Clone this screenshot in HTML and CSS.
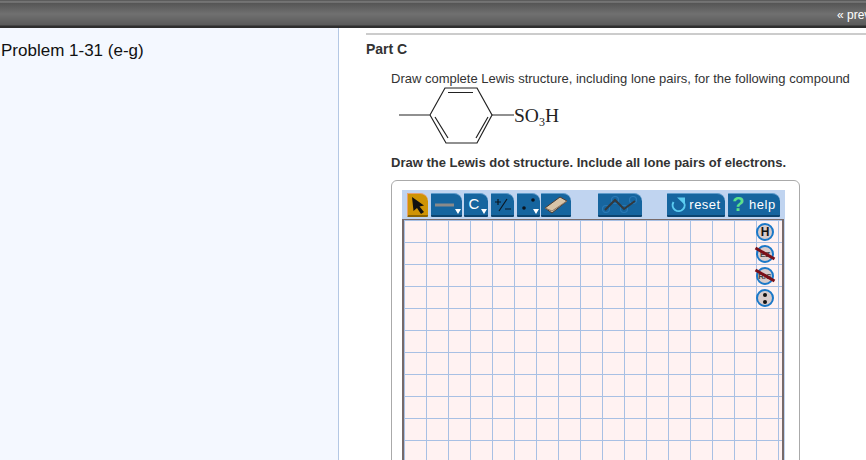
FILE: index.html
```html
<!DOCTYPE html>
<html lang="en">
<head>
    <meta charset="UTF-8">
    <title>Problem 1-31 (e-g)</title>
    <link rel="stylesheet" href="styles.css">
</head>
<body>
    <div class="topbar"><span class="prev">« prev</span></div>

    <div class="page">
        <div class="sidebar">
            <h1>Problem 1-31 (e-g)</h1>
        </div>

        <div class="main">
            <div class="rule"></div>
            <h2>Part C</h2>
            <div class="question">
                <p class="intro">Draw complete Lewis structure, including lone pairs, for the following compound</p>
                <div class="molecule">
                    <svg width="170" height="64" viewBox="0 3 170 64">
                        <g fill="none" stroke="#222" stroke-width="1.2">
                            <path d="M8 32H39L54 5H86L101 32L86 60H55L39 32"/>
                            <path d="M57 9.500H82M44 34L57 55M85 55L97 34M101 32H123"/>
                        </g>
                        <text x="123" y="39" class="formula">SO<tspan class="sub" dy="4">3</tspan><tspan dy="-4">H</tspan></text>
                    </svg>
                </div>
                <p class="prompt">Draw the Lewis dot structure. Include all lone pairs of electrons.</p>

                <div class="frame">
                    <div class="applet">
                        <div class="toolbar">
                            <div class="tool tool-arrow">
                                <svg width="16" height="18" viewBox="0 0 16 18"><path d="M2 1L14 9.500L9.500 10.500L14 16L11 18L7 12L3.500 15Z" fill="#111"/></svg>
                            </div>
                            <div class="tool tool-line drop">
                                <svg width="20" height="6" viewBox="0 0 20 6"><path d="M0 3H19" stroke="#8a8a8a" stroke-width="3"/></svg>
                            </div>
                            <div class="tool tool-c drop">C</div>
                            <div class="tool tool-charge">
                                <svg width="16" height="14" viewBox="0 0 16 14"><path d="M3 1V7M0 4H6M4 13L12 1M10 11H16" stroke="#0b1722" stroke-width="1.200" fill="none"/></svg>
                            </div>
                            <div class="tool tool-dots drop">
                                <svg width="16" height="16" viewBox="0 0 16 16"><circle cx="3" cy="11" r="1.800" fill="#0b1520"/><circle cx="12" cy="3" r="1.800" fill="#0b1520"/></svg>
                            </div>
                            <div class="tool tool-eraser">
                                <svg width="24" height="18" viewBox="0 0 24 18"><path d="M1 12L16 1L23 5L8 17Z" fill="#d8c4a8" stroke="#4a3a30"/><path d="M1 12L8 15L23 5" fill="none" stroke="#8a7868"/></svg>
                            </div>
                            <div class="tool tool-chain">
                                <svg width="36" height="18" viewBox="0 0 36 18">
                                    <g fill="none" stroke="#2a78b4" stroke-width="1.200"><circle cx="4" cy="13" r="3.500"/><circle cx="13" cy="4" r="3.500"/><circle cx="22" cy="13" r="3.500"/><circle cx="31" cy="4" r="3.500"/></g>
                                    <path d="M3 14L13 4L22 13L33 5" fill="none" stroke="#33383c" stroke-width="2"/>
                                </svg>
                            </div>
                            <div class="tool tool-reset">
                                <svg width="15" height="16" viewBox="0 0 15 16"><path d="M2.500 5A6 6 0 1 0 12 4" fill="none" stroke="#5ccbf0" stroke-width="2"/><path d="M6 0.500H14V8Z" fill="#5ccbf0"/></svg>
                                <span>reset</span>
                            </div>
                            <div class="tool tool-help"><b>?</b><span>help</span></div>
                        </div>
                        <div class="canvas">
                            <div class="side-icons">
                                <div class="badge">H</div>
                                <div class="badge badge-off">EZ</div>
                                <div class="badge badge-off">R/S</div>
                                <div class="badge badge-dots"><i></i><i></i></div>
                            </div>
                        </div>
                    </div>
                </div>
            </div>
        </div>
    </div>
</body>
</html>
```

FILE: styles.css
```css
body {
    margin: 0;
    height: 460px;
    overflow: hidden;
    background: #fff;
    color: #333;
    font-family: "Liberation Sans", Arial, sans-serif;
}

.topbar {
    box-sizing: border-box;
    height: 28px;
    padding: 8px 0 0 837px;
    white-space: nowrap;
    overflow: hidden;
    color: #fff;
    font-size: 12px;
    background: linear-gradient(#5c5c5c 0, #5c5c5c 1px, #8c8c8c 2px, #555 3px, #707070 14px, #5a5a5a 25px, #2e2e2e 26px, #2e2e2e 28px);
}

.page {
    display: flex;
    height: 432px;
}

.sidebar {
    width: 338px;
    background: #f4f8ff;
    border-right: 1px solid #b4c8e4;
}

.sidebar h1 {
    margin: 13px 0 0 1px;
    font-size: 17px;
    line-height: 20px;
    font-weight: normal;
    color: #111;
}

.main {
    flex: 1;
    padding: 5px 0 0 27px;
}

.rule {
    height: 2px;
    background: #ccc;
}

h2 {
    margin: 6px 0 0;
    font-size: 14px;
    line-height: 17px;
}

.question {
    padding-left: 25px;
}

.intro {
    margin: 13px 0 0;
    font-size: 13px;
    line-height: 15px;
    white-space: nowrap;
}

.molecule {
    height: 64px;
}

.molecule svg {
    display: block;
}

.formula {
    font-family: "Liberation Serif", serif;
    font-size: 19.5px;
    fill: #222;
}

.sub {
    font-size: 12px;
}

.prompt {
    margin: 5px 0 0;
    font-size: 13px;
    line-height: 15px;
    font-weight: bold;
    white-space: nowrap;
}

.frame {
    box-sizing: border-box;
    width: 409px;
    height: 300px;
    margin-top: 10px;
    padding: 9px 0 0 10px;
    border: 1px solid #aaa;
    border-radius: 6px;
}

.applet {
    width: 383px;
    background: #c0d4f0;
}

.toolbar {
    box-sizing: border-box;
    display: flex;
    height: 29px;
    padding: 3px 0 2px 5px;
}

.tool {
    box-sizing: border-box;
    position: relative;
    display: flex;
    align-items: center;
    justify-content: center;
    height: 24px;
    margin-right: 3px;
    color: #fff;
    font-size: 13px;
    background: #16659f;
    border-top: 1px solid #5f9ccc;
    border-bottom: 2px solid #0c4470;
    border-radius: 1px 8px 1px 1px;
}

.drop::after {
    content: "";
    position: absolute;
    right: 1px;
    bottom: 1px;
    border-left: 3px solid transparent;
    border-right: 3px solid transparent;
    border-top: 5px solid #fff;
}

.tool-arrow {
    width: 21px;
    background: #cf9406;
    border-color: #e8a070 #cf9406 #8a6404;
    border-left: 1px solid #e8a070;
}

.tool-line {
    width: 31px;
    margin-right: 2px;
    padding-right: 4px;
}

.tool-c {
    width: 24px;
    padding-right: 4px;
    padding-bottom: 3px;
    font-size: 15px;
}

.tool-charge {
    width: 23px;
}

.tool-dots {
    width: 23px;
    margin-right: 1px;
}

.tool-eraser {
    width: 30px;
    margin-right: 27px;
}

.tool-chain {
    width: 44px;
    margin-right: 25px;
}

.tool-reset {
    width: 58px;
    gap: 3px;
    letter-spacing: 0.5px;
}

.tool-help {
    width: 52px;
    gap: 4px;
    letter-spacing: 0.5px;
}

.tool-help b {
    color: #5ce08c;
    font-size: 20px;
}

.canvas {
    box-sizing: border-box;
    position: relative;
    width: 382px;
    height: 260px;
    border: 1px solid #776a6a;
    border-left-width: 2px;
    border-right-width: 2px;
    background-color: #fff2f2;
    background-image:
        linear-gradient(to right, #a8c0e4 0, #a8c0e4 1px, transparent 1px),
        linear-gradient(to bottom, #a8c0e4 0, #a8c0e4 1px, transparent 1px);
    background-size: 22px 22px;
    background-position: 0 22px;
}

.side-icons {
    position: absolute;
    top: 3px;
    left: 352px;
    display: flex;
    flex-direction: column;
    gap: 4px;
}

.badge {
    box-sizing: border-box;
    position: relative;
    display: flex;
    flex-direction: column;
    align-items: center;
    justify-content: center;
    width: 18px;
    height: 18px;
    border: 2px solid #1a78c8;
    border-radius: 50%;
    background: #d8cccc;
    color: #111;
    font-size: 12px;
    font-weight: bold;
}

.badge-off {
    font-size: 8px;
    color: #444;
}

.badge-off::after {
    content: "";
    position: absolute;
    left: -4px;
    top: 5px;
    width: 22px;
    height: 3px;
    background: #7a1018;
    transform: rotate(30deg);
}

.badge-dots {
    gap: 3px;
}

.badge-dots i {
    width: 4px;
    height: 4px;
    border-radius: 50%;
    background: #111;
}
```
